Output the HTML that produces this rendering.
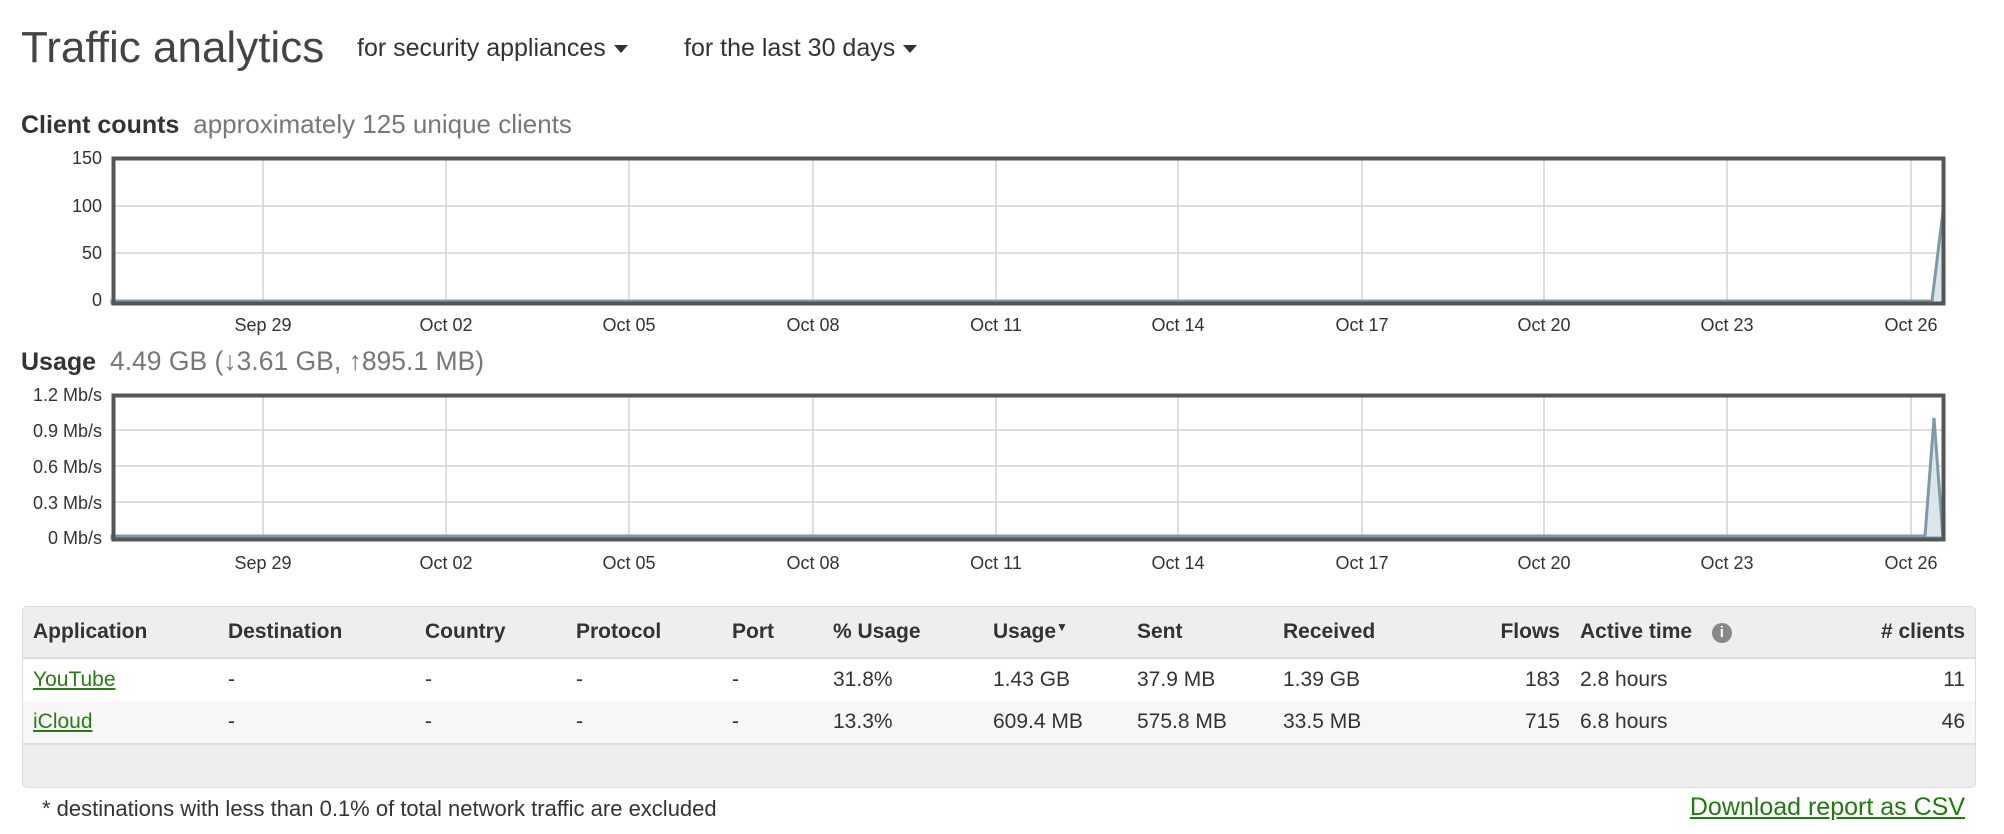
<!DOCTYPE html>
<html><head><meta charset="utf-8"><style>
body{margin:0;width:2004px;height:834px;background:#fff;font-family:"Liberation Sans",Arial,sans-serif;color:#333;position:relative;overflow:hidden}
.a{position:absolute;white-space:nowrap}
.caret{display:inline-block;width:0;height:0;border-left:7px solid transparent;border-right:7px solid transparent;border-top:8px solid #333;vertical-align:middle;margin-left:8px}
table{border-collapse:collapse;width:100%;font-size:21px;table-layout:fixed}
td,th{padding:0 0 0 10px;text-align:left;height:42px;white-space:nowrap}
th{font-weight:bold;height:50px}
a{color:#2a7a16;text-decoration:underline}
</style></head><body>
<div class="a" style="left:21px;top:23px;font-size:44px;font-weight:300;color:#444">Traffic analytics</div>
<div class="a" style="left:357px;top:34px;font-size:25px">for security appliances<span class="caret"></span></div>
<div class="a" style="left:684px;top:34px;font-size:25px">for the last 30 days<span class="caret"></span></div>
<div class="a" style="left:21px;top:109px;font-size:25px"><b>Client counts</b>&nbsp; <span style="color:#777;font-size:26px">approximately 125 unique clients</span></div>
<div class="a" style="left:21px;top:346px;font-size:25px"><b>Usage</b>&nbsp; <span style="color:#777;font-size:26.5px">4.49 GB (↓3.61 GB, ↑895.1 MB)</span></div>

<svg class="a" style="left:0;top:140px" width="2004" height="200" font-family="Liberation Sans" font-size="18" fill="#333">
<g stroke="#d4d4d4" stroke-width="1.5">
<line x1="112" x2="1945" y1="66" y2="66"/><line x1="112" x2="1945" y1="113" y2="113"/>
<line x1="263" x2="263" y1="17" y2="165"/><line x1="446" x2="446" y1="17" y2="165"/><line x1="629" x2="629" y1="17" y2="165"/><line x1="813" x2="813" y1="17" y2="165"/><line x1="996" x2="996" y1="17" y2="165"/><line x1="1178" x2="1178" y1="17" y2="165"/><line x1="1362" x2="1362" y1="17" y2="165"/><line x1="1544" x2="1544" y1="17" y2="165"/><line x1="1727" x2="1727" y1="17" y2="165"/><line x1="1911" x2="1911" y1="17" y2="165"/>
</g>
<polygon points="112,161 1932,161 1944,63 1944,163 112,163" fill="#dbe5ea" stroke="#7d9aa8" stroke-width="3"/>
<rect x="113.5" y="18.5" width="1830" height="145" fill="none" stroke="#555" stroke-width="4"/>
<g text-anchor="end"><text x="102" y="24">150</text><text x="102" y="72">100</text><text x="102" y="119">50</text><text x="102" y="166">0</text></g>
<g text-anchor="middle"><text x="263" y="191">Sep 29</text><text x="446" y="191">Oct 02</text><text x="629" y="191">Oct 05</text><text x="813" y="191">Oct 08</text><text x="996" y="191">Oct 11</text><text x="1178" y="191">Oct 14</text><text x="1362" y="191">Oct 17</text><text x="1544" y="191">Oct 20</text><text x="1727" y="191">Oct 23</text><text x="1911" y="191">Oct 26</text></g>
</svg>

<svg class="a" style="left:0;top:380px" width="2004" height="200" font-family="Liberation Sans" font-size="18" fill="#333">
<g stroke="#d4d4d4" stroke-width="1.5">
<line x1="112" x2="1945" y1="50" y2="50"/><line x1="112" x2="1945" y1="86" y2="86"/><line x1="112" x2="1945" y1="122" y2="122"/>
<line x1="263" x2="263" y1="15" y2="160"/><line x1="446" x2="446" y1="15" y2="160"/><line x1="629" x2="629" y1="15" y2="160"/><line x1="813" x2="813" y1="15" y2="160"/><line x1="996" x2="996" y1="15" y2="160"/><line x1="1178" x2="1178" y1="15" y2="160"/><line x1="1362" x2="1362" y1="15" y2="160"/><line x1="1544" x2="1544" y1="15" y2="160"/><line x1="1727" x2="1727" y1="15" y2="160"/><line x1="1911" x2="1911" y1="15" y2="160"/>
</g>
<polygon points="112,156 1925,156 1934,38 1943,158 112,158" fill="#dbe5ea" stroke="#7d9aa8" stroke-width="3"/>
<rect x="113.5" y="15.5" width="1830" height="144" fill="none" stroke="#555" stroke-width="4"/>
<g text-anchor="end"><text x="102" y="21">1.2 Mb/s</text><text x="102" y="57">0.9 Mb/s</text><text x="102" y="93">0.6 Mb/s</text><text x="102" y="129">0.3 Mb/s</text><text x="102" y="164">0 Mb/s</text></g>
<g text-anchor="middle"><text x="263" y="189">Sep 29</text><text x="446" y="189">Oct 02</text><text x="629" y="189">Oct 05</text><text x="813" y="189">Oct 08</text><text x="996" y="189">Oct 11</text><text x="1178" y="189">Oct 14</text><text x="1362" y="189">Oct 17</text><text x="1544" y="189">Oct 20</text><text x="1727" y="189">Oct 23</text><text x="1911" y="189">Oct 26</text></g>
</svg>

<div class="a" style="left:22px;top:606px;width:1952px;height:180px;border:1px solid #ddd;border-radius:5px;background:#eee;overflow:hidden">
<table>
<colgroup><col style="width:195px"><col style="width:197px"><col style="width:151px"><col style="width:156px"><col style="width:101px"><col style="width:160px"><col style="width:144px"><col style="width:146px"><col style="width:210px"><col style="width:77px"><col style="width:300px"><col></colgroup>
<tr style="border-bottom:2px solid #ddd"><th>Application</th><th>Destination</th><th>Country</th><th>Protocol</th><th>Port</th><th>% Usage</th><th>Usage<span style="font-size:12px;vertical-align:top">▼</span></th><th>Sent</th><th>Received</th><th style="text-align:right">Flows</th><th style="padding-left:20px">Active time <span style="display:inline-block;width:20px;height:20px;border-radius:50%;background:#888;color:#fff;font-size:15px;text-align:center;line-height:20px;margin-left:14px;vertical-align:1px">i</span></th><th style="text-align:right;padding-right:10px">#&nbsp;clients</th></tr>
<tr style="background:#fff"><td><a>YouTube</a></td><td>-</td><td>-</td><td>-</td><td>-</td><td>31.8%</td><td>1.43 GB</td><td>37.9 MB</td><td>1.39 GB</td><td style="text-align:right">183</td><td style="padding-left:20px">2.8 hours</td><td style="text-align:right;padding-right:10px">11</td></tr>
<tr style="background:#f7f7f7;border-bottom:2px solid #ddd"><td><a>iCloud</a></td><td>-</td><td>-</td><td>-</td><td>-</td><td>13.3%</td><td>609.4 MB</td><td>575.8 MB</td><td>33.5 MB</td><td style="text-align:right">715</td><td style="padding-left:20px">6.8 hours</td><td style="text-align:right;padding-right:10px">46</td></tr>
</table></div>
<div class="a" style="left:42px;top:796px;font-size:22px">* destinations with less than 0.1% of total network traffic are excluded</div>
<div class="a" style="right:39px;top:793px;font-size:25px"><a style="color:#1f7a10">Download report as CSV</a></div>
</body></html>
